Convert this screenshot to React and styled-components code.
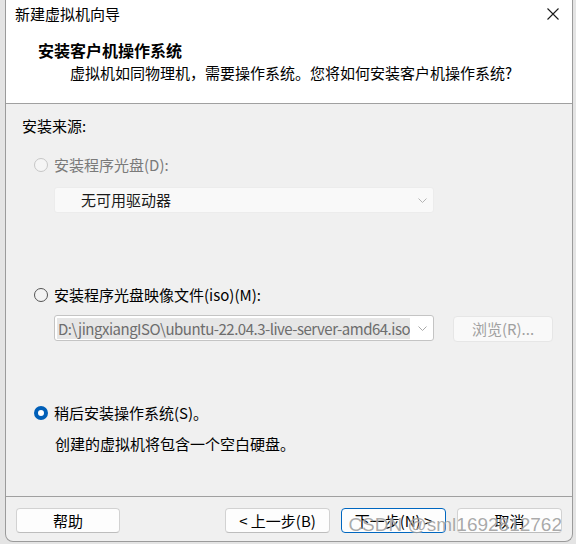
import React from "react";
import styled, { createGlobalStyle } from "styled-components";

const GlobalStyle = createGlobalStyle`
  html, body { margin: 0; padding: 0; }
  body {
    background: #e4e4e4;
    font-family: "Noto Sans CJK SC", "Noto Sans", sans-serif;
    -webkit-font-smoothing: antialiased;
  }
`;

const Page = styled.div`
  width: 576px;
  height: 544px;
  box-sizing: border-box;
  padding: 0 3px 2px 5px;
  background: #e4e4e4;
`;

const Window = styled.div`
  position: relative;
  width: 568px;
  height: 542px;
  box-sizing: border-box;
  border: 1px solid #9b9b9b;
  border-top: none;
  border-radius: 0 0 8px 8px;
  background: #f0f0f0;
  display: flex;
  flex-direction: column;
  overflow: hidden;
  font-size: 15px;
  color: #000;
`;

const TitleBar = styled.div`
  height: 28px;
  flex-shrink: 0;
  display: flex;
  align-items: center;
  justify-content: space-between;
  padding-left: 9px;
  background: #fff;
`;

const TitleText = styled.span`
  font-size: 15px;
  line-height: 20px;
  color: #000;
`;

const CloseButton = styled.div`
  width: 39px;
  height: 28px;
  display: flex;
  align-items: center;
  justify-content: center;
`;

const Header = styled.div`
  height: 76px;
  flex-shrink: 0;
  box-sizing: border-box;
  background: #fff;
  border-bottom: 1px solid #a0a0a0;
  padding: 11px 0 0 32px;
  display: flex;
  flex-direction: column;
`;

const HeaderTitle = styled.div`
  font-size: 16px;
  font-weight: 700;
  line-height: 22px;
`;

const HeaderSub = styled.div`
  font-size: 15px;
  line-height: 22px;
  margin-left: 32px;
  margin-top: 1px;
`;

const Body = styled.div`
  flex: 1;
  display: flex;
  flex-direction: column;
  padding-top: 12px;
`;

const SectionLabel = styled.div`
  line-height: 20px;
  margin-left: 16px;
`;

const RadioRow = styled.div`
  display: flex;
  align-items: center;
  gap: 6px;
  height: 20px;
  margin-left: 28px;
  margin-top: ${(p) => p.$mt}px;
`;

const Radio = styled.span`
  width: 14px;
  height: 14px;
  box-sizing: border-box;
  border-radius: 50%;
  flex-shrink: 0;
  border: ${(p) =>
    p.$checked ? "4.5px solid #005fb8" : p.$disabled ? "1px solid #c6c6c6" : "1px solid #545454"};
  background: ${(p) => (p.$checked ? "#fff" : p.$disabled ? "#f5f5f5" : "#f3f3f3")};
`;

const RadioLabel = styled.span`
  line-height: 20px;
  color: ${(p) => (p.$disabled ? "#7a7a7a" : "#000")};
`;

const Combo = styled.div`
  width: 380px;
  height: 26px;
  box-sizing: border-box;
  display: flex;
  align-items: center;
  justify-content: space-between;
  padding-right: 6px;
  border-radius: 3px;
  flex-shrink: 0;
  border: 1px solid ${(p) => (p.$disabled ? "#ececec" : "#c4c4c4")};
  background: ${(p) => (p.$disabled ? "#f9f9f9" : "#fff")};
  margin-left: ${(p) => (p.$standalone ? "48px" : "0")};
  margin-top: ${(p) => (p.$standalone ? "12px" : "0")};
`;

const ComboText = styled.span`
  padding-left: 26px;
  line-height: 20px;
  color: #1b1b1b;
`;

const Selection = styled.span`
  width: 353px;
  height: 21px;
  margin-left: 2px;
  padding-left: 1px;
  box-sizing: border-box;
  background: #e6e6e6;
  color: #6d6d6d;
  line-height: 21px;
  white-space: nowrap;
  overflow: hidden;
  letter-spacing: -0.5px;
`;

const ComboRow = styled.div`
  display: flex;
  align-items: flex-start;
  gap: 19px;
  margin-left: 48px;
  margin-top: 10px;
`;

const BrowseButton = styled.div`
  width: 100px;
  height: 26px;
  margin-top: 1px;
  box-sizing: border-box;
  border: 1px solid #e6e6e6;
  border-radius: 4px;
  background: #f9f9f9;
  color: #a0a0a0;
  display: flex;
  align-items: center;
  justify-content: center;
  line-height: 20px;
`;

const Note = styled.div`
  line-height: 20px;
  margin-left: 49px;
  margin-top: 11px;
`;

const Footer = styled.div`
  height: 45px;
  flex-shrink: 0;
  box-sizing: border-box;
  border-top: 1px solid #a0a0a0;
  padding: 11px 10px 0 10px;
  display: flex;
  align-items: flex-start;
  gap: 11px;
`;

const Button = styled.div`
  width: ${(p) => p.$w || 105}px;
  height: 25px;
  box-sizing: border-box;
  border-radius: 4px;
  border: 1px solid ${(p) => (p.$primary ? "#0067c0" : "#d2d2d2")};
  border-bottom-color: ${(p) => (p.$primary ? "#0067c0" : "#bdbdbd")};
  background: #fdfdfd;
  display: flex;
  align-items: center;
  justify-content: center;
  line-height: 20px;
  color: #000;
  margin-right: ${(p) => (p.$pushLeft ? "auto" : "0")};
`;

const Watermark = styled.div`
  position: absolute;
  right: 10px;
  top: 515px;
  font-family: "Liberation Sans", Arial, sans-serif;
  font-size: 19px;
  line-height: 20px;
  color: rgba(95, 95, 95, 0.55);
  text-shadow: 0 0 1px rgba(255, 255, 255, 0.9);
  white-space: nowrap;
  pointer-events: none;
`;

const Chevron = ({ color }) => (
  <svg width="9" height="5" viewBox="0 0 9 5" fill="none">
    <path d="M0.5 0.5 L4.5 4.5 L8.5 0.5" stroke={color} strokeWidth="1" />
  </svg>
);

const CloseIcon = () => (
  <svg width="12" height="12" viewBox="0 0 12 12" fill="none">
    <path d="M0.5 0.5 L11.5 11.5 M11.5 0.5 L0.5 11.5" stroke="#1a1a1a" strokeWidth="1.1" />
  </svg>
);

export default function App() {
  return (
    <>
      <GlobalStyle />
      <Page>
        <Window>
          <TitleBar>
            <TitleText>新建虚拟机向导</TitleText>
            <CloseButton>
              <CloseIcon />
            </CloseButton>
          </TitleBar>
          <Header>
            <HeaderTitle>安装客户机操作系统</HeaderTitle>
            <HeaderSub>虚拟机如同物理机，需要操作系统。您将如何安装客户机操作系统?</HeaderSub>
          </Header>
          <Body>
            <SectionLabel>安装来源:</SectionLabel>
            <RadioRow $mt={19}>
              <Radio $disabled />
              <RadioLabel $disabled>安装程序光盘(D):</RadioLabel>
            </RadioRow>
            <Combo $disabled $standalone>
              <ComboText>无可用驱动器</ComboText>
              <Chevron color="#b4b4b4" />
            </Combo>
            <RadioRow $mt={72}>
              <Radio />
              <RadioLabel>安装程序光盘映像文件(iso)(M):</RadioLabel>
            </RadioRow>
            <ComboRow>
              <Combo>
                <Selection>D:\jingxiangISO\ubuntu-22.04.3-live-server-amd64.iso</Selection>
                <Chevron color="#a8a8a8" />
              </Combo>
              <BrowseButton>浏览(R)...</BrowseButton>
            </ComboRow>
            <RadioRow $mt={61}>
              <Radio $checked />
              <RadioLabel>稍后安装操作系统(S)。</RadioLabel>
            </RadioRow>
            <Note>创建的虚拟机将包含一个空白硬盘。</Note>
          </Body>
          <Footer>
            <Button $w={104} $pushLeft>帮助</Button>
            <Button>&lt; 上一步(B)</Button>
            <Button $primary>下一步(N) &gt;</Button>
            <Button>取消</Button>
          </Footer>
          <Watermark>CSDN @sml1692812762</Watermark>
        </Window>
      </Page>
    </>
  );
}
